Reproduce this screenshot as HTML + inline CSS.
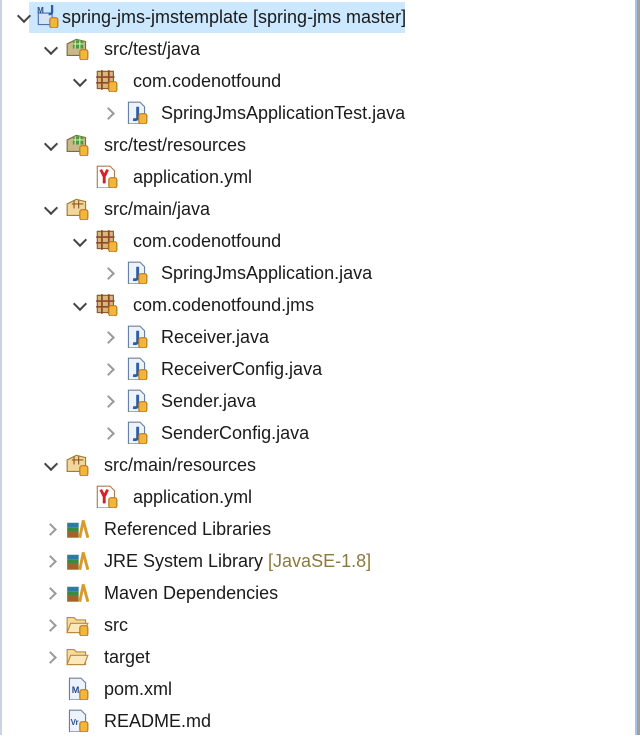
<!DOCTYPE html>
<html><head><meta charset="utf-8"><style>
html,body{margin:0;padding:0;background:#fff;}
body{width:640px;height:735px;position:relative;overflow:hidden;font-family:"Liberation Sans",sans-serif;font-size:18px;color:#1a1a1a;}
.lb{position:absolute;left:0;top:0;width:2px;height:735px;background:#c8d4e4;}
.rb{position:absolute;right:0;top:0;width:5px;height:735px;background:linear-gradient(90deg,#a9c3e4 0 2px,#a0a0a0 2px);}
.sel{position:absolute;left:29px;top:2px;width:376px;height:31px;background:#cce8ff;}
.r{position:absolute;height:32px;line-height:32px;white-space:nowrap;}
.ch{position:absolute;top:10px;width:8px;height:8px;border-right:2px solid #444;border-bottom:2px solid #444;transform:rotate(45deg);}
.cc{position:absolute;top:12px;width:7px;height:7px;border-right:2px solid #999;border-bottom:2px solid #999;transform:rotate(-45deg);}
.ic{position:absolute;top:4px;width:23px;height:23px;}
.t{position:absolute;top:0;}
.g{color:#8b7a3c;}
</style></head><body>
<div class="lb"></div><div class="rb"></div><div class="sel"></div>

<svg width="0" height="0" style="position:absolute">
<defs>
<g id="jar"><rect x="12" y="11" width="7" height="9" rx="2" fill="#f4b53c" stroke="#b8791a" stroke-width="1"/></g>
<g id="srcf"><path d="M1 6 L9 2 L17 4 L17 16 L1 16Z" fill="#c9b98a" stroke="#7d6c3e"/><rect x="6" y="3" width="9" height="7" fill="#4a9a3a"/><path d="M8 3v7M12 3v7M6 6h9" stroke="#d8e9c0"/><use href="#jar"/></g>
<g id="srcm"><path d="M1 6 L9 2 L17 4 L17 16 L1 16Z" fill="#f1d79b" stroke="#a07b32"/><path d="M7 3v7M11 3v7M5 6h10" stroke="#8a5a2a"/><use href="#jar"/></g>
<g id="pkg"><rect x="2" y="2" width="14" height="15" fill="#d9b57a" stroke="#8b5a2b"/><path d="M6 1v17M12 1v17M1 7h16M1 12h16" stroke="#8b4a2a" stroke-width="1.5"/><use href="#jar"/></g>
<g id="java"><path d="M3 1h10l4 4v15H3Z" fill="#eef3fb" stroke="#6a7fa8"/><path d="M11 5v9q0 3-4 2" fill="none" stroke="#2b5ea8" stroke-width="2.5"/><use href="#jar"/></g>
<g id="yml"><path d="M2 1h11l4 4v15H2Z" fill="#fff" stroke="#b07a50"/><path d="M5 4l3 6 3-6M8 10v6" fill="none" stroke="#d3202a" stroke-width="2.5"/><use href="#jar"/></g>
<g id="lib"><rect x="1" y="5" width="10" height="4" fill="#2f7aa0"/><rect x="1" y="9" width="10" height="4" fill="#3a8a3a"/><rect x="1" y="13" width="10" height="5" fill="#a0642a"/><path d="M12 18L15 3L19 18" fill="none" stroke="#d89a2a" stroke-width="2.5"/></g>
<g id="fold"><path d="M1 4h6l2 2h8v11H1Z" fill="#f6dca0" stroke="#b88a3a"/><path d="M1 17l3-8h15l-3 8Z" fill="#fbe9bd" stroke="#b88a3a"/></g>
<g id="pom"><path d="M3 1h10l4 4v15H3Z" fill="#eef3fb" stroke="#6a7fa8"/><text x="5" y="14" font-size="8" font-weight="bold" fill="#2b4e8a" font-family="Liberation Sans">M</text><use href="#jar"/></g>
<g id="md"><path d="M3 1h10l4 4v15H3Z" fill="#eef3fb" stroke="#6a7fa8"/><text x="4" y="14" font-size="7" font-weight="bold" fill="#2b4e8a" font-family="Liberation Sans">Vr</text><use href="#jar"/></g>
<g id="proj"><rect x="2" y="7" width="12" height="10" fill="#d6e4f6" stroke="#4a72b0"/><text x="1" y="7" font-size="7" font-weight="bold" fill="#2b4e8a" font-family="Liberation Sans">M</text><path d="M14 0v6q0 2-3 2" fill="none" stroke="#2b5ea8" stroke-width="2"/><use href="#jar"/></g>
</defs></svg>

<div class="r" style="top:1px;left:0"><div class="ch" style="left:19px"></div><svg class="ic" viewBox="0 0 20 20" style="left:36px"><use href="#proj"/></svg><span class="t" style="left:62px">spring-jms-jmstemplate [spring-jms master]</span></div>
<div class="r" style="top:33px;left:0"><div class="ch" style="left:46px"></div><svg class="ic" viewBox="0 0 20 20" style="left:66px"><use href="#srcf"/></svg><span class="t" style="left:104px">src/test/java</span></div>
<div class="r" style="top:65px;left:0"><div class="ch" style="left:75px"></div><svg class="ic" viewBox="0 0 20 20" style="left:95px"><use href="#pkg"/></svg><span class="t" style="left:133px">com.codenotfound</span></div>
<div class="r" style="top:97px;left:0"><div class="cc" style="left:104px"></div><svg class="ic" viewBox="0 0 20 20" style="left:125px"><use href="#java"/></svg><span class="t" style="left:161px">SpringJmsApplicationTest.java</span></div>
<div class="r" style="top:129px;left:0"><div class="ch" style="left:46px"></div><svg class="ic" viewBox="0 0 20 20" style="left:66px"><use href="#srcf"/></svg><span class="t" style="left:104px">src/test/resources</span></div>
<div class="r" style="top:161px;left:0"><svg class="ic" viewBox="0 0 20 20" style="left:95px"><use href="#yml"/></svg><span class="t" style="left:133px">application.yml</span></div>
<div class="r" style="top:193px;left:0"><div class="ch" style="left:46px"></div><svg class="ic" viewBox="0 0 20 20" style="left:66px"><use href="#srcm"/></svg><span class="t" style="left:104px">src/main/java</span></div>
<div class="r" style="top:225px;left:0"><div class="ch" style="left:75px"></div><svg class="ic" viewBox="0 0 20 20" style="left:95px"><use href="#pkg"/></svg><span class="t" style="left:133px">com.codenotfound</span></div>
<div class="r" style="top:257px;left:0"><div class="cc" style="left:104px"></div><svg class="ic" viewBox="0 0 20 20" style="left:125px"><use href="#java"/></svg><span class="t" style="left:161px">SpringJmsApplication.java</span></div>
<div class="r" style="top:289px;left:0"><div class="ch" style="left:75px"></div><svg class="ic" viewBox="0 0 20 20" style="left:95px"><use href="#pkg"/></svg><span class="t" style="left:133px">com.codenotfound.jms</span></div>
<div class="r" style="top:321px;left:0"><div class="cc" style="left:104px"></div><svg class="ic" viewBox="0 0 20 20" style="left:125px"><use href="#java"/></svg><span class="t" style="left:161px">Receiver.java</span></div>
<div class="r" style="top:353px;left:0"><div class="cc" style="left:104px"></div><svg class="ic" viewBox="0 0 20 20" style="left:125px"><use href="#java"/></svg><span class="t" style="left:161px">ReceiverConfig.java</span></div>
<div class="r" style="top:385px;left:0"><div class="cc" style="left:104px"></div><svg class="ic" viewBox="0 0 20 20" style="left:125px"><use href="#java"/></svg><span class="t" style="left:161px">Sender.java</span></div>
<div class="r" style="top:417px;left:0"><div class="cc" style="left:104px"></div><svg class="ic" viewBox="0 0 20 20" style="left:125px"><use href="#java"/></svg><span class="t" style="left:161px">SenderConfig.java</span></div>
<div class="r" style="top:449px;left:0"><div class="ch" style="left:46px"></div><svg class="ic" viewBox="0 0 20 20" style="left:66px"><use href="#srcm"/></svg><span class="t" style="left:104px">src/main/resources</span></div>
<div class="r" style="top:481px;left:0"><svg class="ic" viewBox="0 0 20 20" style="left:95px"><use href="#yml"/></svg><span class="t" style="left:133px">application.yml</span></div>
<div class="r" style="top:513px;left:0"><div class="cc" style="left:46px"></div><svg class="ic" viewBox="0 0 20 20" style="left:66px"><use href="#lib"/></svg><span class="t" style="left:104px">Referenced Libraries</span></div>
<div class="r" style="top:545px;left:0"><div class="cc" style="left:46px"></div><svg class="ic" viewBox="0 0 20 20" style="left:66px"><use href="#lib"/></svg><span class="t" style="left:104px">JRE System Library <span class="g">[JavaSE-1.8]</span></span></div>
<div class="r" style="top:577px;left:0"><div class="cc" style="left:46px"></div><svg class="ic" viewBox="0 0 20 20" style="left:66px"><use href="#lib"/></svg><span class="t" style="left:104px">Maven Dependencies</span></div>
<div class="r" style="top:609px;left:0"><div class="cc" style="left:46px"></div><svg class="ic" viewBox="0 0 20 20" style="left:66px"><use href="#fold"/><use href="#jar"/></svg><span class="t" style="left:104px">src</span></div>
<div class="r" style="top:641px;left:0"><div class="cc" style="left:46px"></div><svg class="ic" viewBox="0 0 20 20" style="left:66px"><use href="#fold"/></svg><span class="t" style="left:104px">target</span></div>
<div class="r" style="top:673px;left:0"><svg class="ic" viewBox="0 0 20 20" style="left:66px"><use href="#pom"/></svg><span class="t" style="left:104px">pom.xml</span></div>
<div class="r" style="top:705px;left:0"><svg class="ic" viewBox="0 0 20 20" style="left:66px"><use href="#md"/></svg><span class="t" style="left:104px">README.md</span></div>
</body></html>
